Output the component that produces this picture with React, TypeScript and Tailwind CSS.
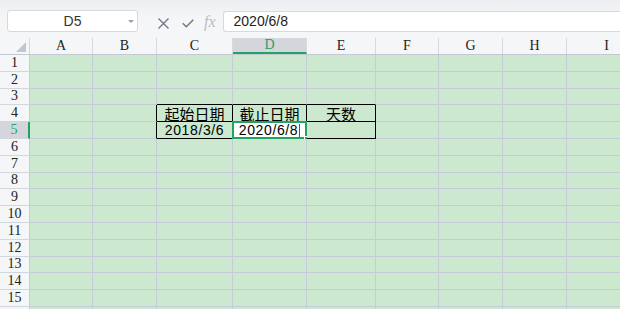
import React from 'react';

const cols = [
  { k: 'A', w: 'w-[63px]' },
  { k: 'B', w: 'w-[64px]' },
  { k: 'C', w: 'w-[76px]' },
  { k: 'D', w: 'w-[74px]' },
  { k: 'E', w: 'w-[69px]' },
  { k: 'F', w: 'w-[63px]' },
  { k: 'G', w: 'w-[64px]' },
  { k: 'H', w: 'w-[64px]' },
  { k: 'I', w: 'w-[80px]' },
];

const cells: Record<string, string> = {
  C4: '起始日期',
  D4: '截止日期',
  E4: '天数',
  C5: '2018/3/6',
};

const inTable = (r: number, c: string) => r >= 4 && r <= 5 && ['C', 'D', 'E'].includes(c);

function Cell({ r, c, w }: { r: number; c: string; w: string }) {
  const rightBlack = inTable(r, c) || (c === 'B' && (r === 4 || r === 5));
  const bottomBlack = ['C', 'D', 'E'].includes(c) && r >= 3 && r <= 5;
  const active = r === 5 && c === 'D';
  const text = cells[c + r];
  const cjk = r === 4;

  return (
    <div
      className={`${w} shrink-0 h-full border-r border-b relative flex items-center justify-center ${
        rightBlack ? 'border-r-black' : 'border-r-[#c5cbd8]'
      } ${bottomBlack ? 'border-b-black' : 'border-b-[#c5cbd8]'} ${active ? 'bg-white' : 'bg-[#cce8cf]'}`}
    >
      {text && (
        <span
          className={
            cjk
              ? "text-[15px] leading-none text-black font-['Noto_Sans_CJK_SC',sans-serif]"
              : "text-[14px] leading-none tracking-[0.6px] text-black font-['Liberation_Sans',sans-serif]"
          }
        >
          {text}
        </span>
      )}
      {active && (
        <>
          <span className="flex items-center text-[14px] leading-none tracking-[0.6px] text-black font-['Liberation_Sans',sans-serif]">
            2020/6/8
            <span className="ml-[1px] w-px h-[13px] bg-[#555]" />
          </span>
          <div className="absolute -top-[1px] -left-[1px] -right-[1px] -bottom-[1px] border-2 border-[#21a366]" />
          <div className="absolute -right-[3px] -bottom-[3px] w-[5px] h-[5px] bg-[#21a366] border border-white" />
        </>
      )}
    </div>
  );
}

export default function App() {
  const rows = Array.from({ length: 16 }, (_, i) => i + 1);

  return (
    <div className="w-[620px] h-[309px] overflow-hidden bg-[#f5f6f8] select-none">
      {/* formula bar */}
      <div className="h-[38px] flex items-start pt-[10px] pl-[7px] bg-gradient-to-b from-[#eceef1] via-[#f5f6f8] to-[#f5f6f8]">
        <div className="w-[131px] h-[22px] bg-white border border-[#d6d9df] rounded-[3px] relative flex items-center justify-center">
          <span className="text-[14px] text-[#333] font-['Liberation_Sans',sans-serif]">D5</span>
          <span className="absolute right-[3px] top-[9px] w-0 h-0 border-l-[3px] border-r-[3px] border-t-[3px] border-l-transparent border-r-transparent border-t-[#9aa0a8]" />
        </div>
        <div className="ml-[20px] mt-[7px] flex items-center">
          <svg width="11" height="11" viewBox="0 0 11 11" className="text-[#6f7580]">
            <path d="M0.5 0.5L10.5 10.5M10.5 0.5L0.5 10.5" stroke="currentColor" strokeWidth="1.3" fill="none" />
          </svg>
          <svg width="12" height="9" viewBox="0 0 12 9" className="ml-[13px] text-[#6f7580]">
            <path d="M0.7 4.2L4.3 7.8L11.3 0.8" stroke="currentColor" strokeWidth="1.4" fill="none" />
          </svg>
          <span className="ml-[10px] -mt-[3px] text-[16px] leading-none italic text-[#b8bcc4] font-['Liberation_Serif',serif]">
            fx
          </span>
        </div>
        <div className="ml-[7px] mt-[1px] flex-1 h-[21px] bg-white border border-[#d6d9df] border-r-0 rounded-l-[3px] flex items-center pl-[10px]">
          <span className="text-[14px] text-[#222] font-['Liberation_Sans',sans-serif]">2020/6/8</span>
        </div>
      </div>

      {/* column headers */}
      <div className="flex h-[17px] border-b border-[#c4c9d3] bg-[#f5f6f8]">
        <div className="w-[30px] shrink-0 relative border-r border-[#d3d6dd]">
          <svg width="10" height="10" viewBox="0 0 10 10" className="absolute right-[3px] bottom-[2px]">
            <path d="M10 0L10 10L0 10Z" fill="#c3c6cc" />
          </svg>
        </div>
        {cols.map((c) => (
          <div
            key={c.k}
            className={`${c.w} shrink-0 h-full flex items-center justify-center border-r border-[#d6d9df] ${
              c.k === 'D' ? 'bg-[#d4d6dc] border-b-2 border-b-[#21a366]' : ''
            }`}
          >
            <span
              className={`text-[14px] leading-none font-['Liberation_Serif',serif] ${
                c.k === 'D' ? 'text-[#21a366]' : 'text-[#222]'
              }`}
            >
              {c.k}
            </span>
          </div>
        ))}
      </div>

      {/* rows */}
      {rows.map((r) => (
        <div key={r} className="flex h-[16.8px]">
          <div
            className={`w-[30px] shrink-0 h-full flex items-center justify-center border-b border-b-[#d3d6dd] ${
              r === 5 ? 'bg-[#d4d6dc] border-r-2 border-r-[#21a366]' : 'bg-[#f5f6f8] border-r border-r-[#c5cbd8]'
            }`}
          >
            {r <= 15 && (
              <span
                className={`text-[14px] leading-none font-['Liberation_Serif',serif] ${
                  r === 5 ? 'text-[#21a366]' : 'text-[#222]'
                }`}
              >
                {r}
              </span>
            )}
          </div>
          {cols.map((c) => (
            <Cell key={c.k} r={r} c={c.k} w={c.w} />
          ))}
        </div>
      ))}
    </div>
  );
}
